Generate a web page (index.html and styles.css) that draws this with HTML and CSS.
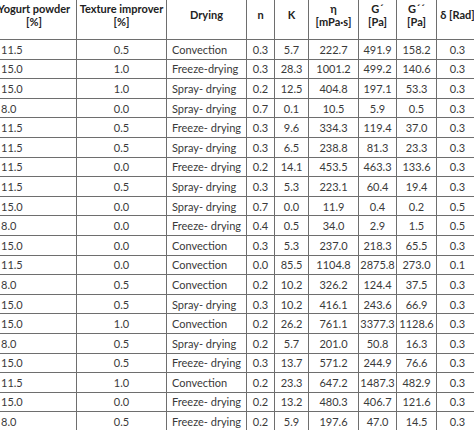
FILE: index.html
```html
<!DOCTYPE html>
<html>
<head>
<meta charset="utf-8">
<link rel="stylesheet" href="styles.css">
</head>
<body>
<table class="data">
<colgroup>
<col class="c1"><col class="c2"><col class="c3"><col class="c4"><col class="c5"><col class="c6"><col class="c7"><col class="c8"><col class="c9">
</colgroup>
<thead>
<tr>
<th>Yogurt powder<br>[%]</th>
<th>Texture improver<br>[%]</th>
<th>Drying</th>
<th>n</th>
<th>K</th>
<th>η<br>[mPa·s]</th>
<th>G´<br>[Pa]</th>
<th>G´´<br>[Pa]</th>
<th>δ [Rad]</th>
</tr>
</thead>
<tbody>
<tr><td>11.5</td><td>0.5</td><td>Convection</td><td>0.3</td><td>5.7</td><td>222.7</td><td>491.9</td><td>158.2</td><td>0.3</td></tr>
<tr><td>15.0</td><td>1.0</td><td>Freeze-drying</td><td>0.3</td><td>28.3</td><td>1001.2</td><td>499.2</td><td>140.6</td><td>0.3</td></tr>
<tr><td>15.0</td><td>1.0</td><td>Spray- drying</td><td>0.2</td><td>12.5</td><td>404.8</td><td>197.1</td><td>53.3</td><td>0.3</td></tr>
<tr><td>8.0</td><td>0.0</td><td>Spray- drying</td><td>0.7</td><td>0.1</td><td>10.5</td><td>5.9</td><td>0.5</td><td>0.3</td></tr>
<tr><td>11.5</td><td>0.5</td><td>Freeze- drying</td><td>0.3</td><td>9.6</td><td>334.3</td><td>119.4</td><td>37.0</td><td>0.3</td></tr>
<tr><td>11.5</td><td>0.5</td><td>Spray- drying</td><td>0.3</td><td>6.5</td><td>238.8</td><td>81.3</td><td>23.3</td><td>0.3</td></tr>
<tr><td>11.5</td><td>0.0</td><td>Freeze- drying</td><td>0.2</td><td>14.1</td><td>453.5</td><td>463.3</td><td>133.6</td><td>0.3</td></tr>
<tr><td>11.5</td><td>0.5</td><td>Spray- drying</td><td>0.3</td><td>5.3</td><td>223.1</td><td>60.4</td><td>19.4</td><td>0.3</td></tr>
<tr><td>15.0</td><td>0.0</td><td>Spray- drying</td><td>0.7</td><td>0.0</td><td>11.9</td><td>0.4</td><td>0.2</td><td>0.5</td></tr>
<tr><td>8.0</td><td>0.0</td><td>Freeze- drying</td><td>0.4</td><td>0.5</td><td>34.0</td><td>2.9</td><td>1.5</td><td>0.5</td></tr>
<tr><td>15.0</td><td>0.0</td><td>Convection</td><td>0.3</td><td>5.3</td><td>237.0</td><td>218.3</td><td>65.5</td><td>0.3</td></tr>
<tr><td>11.5</td><td>0.0</td><td>Convection</td><td>0.0</td><td>85.5</td><td>1104.8</td><td>2875.8</td><td>273.0</td><td>0.1</td></tr>
<tr><td>8.0</td><td>0.5</td><td>Convection</td><td>0.2</td><td>10.2</td><td>326.2</td><td>124.4</td><td>37.5</td><td>0.3</td></tr>
<tr><td>15.0</td><td>0.5</td><td>Spray- drying</td><td>0.3</td><td>10.2</td><td>416.1</td><td>243.6</td><td>66.9</td><td>0.3</td></tr>
<tr><td>15.0</td><td>1.0</td><td>Convection</td><td>0.2</td><td>26.2</td><td>761.1</td><td>3377.3</td><td>1128.6</td><td>0.3</td></tr>
<tr><td>8.0</td><td>0.5</td><td>Spray- drying</td><td>0.2</td><td>5.7</td><td>201.0</td><td>50.8</td><td>16.3</td><td>0.3</td></tr>
<tr><td>15.0</td><td>0.5</td><td>Freeze- drying</td><td>0.3</td><td>13.7</td><td>571.2</td><td>244.9</td><td>76.6</td><td>0.3</td></tr>
<tr><td>11.5</td><td>1.0</td><td>Convection</td><td>0.2</td><td>23.3</td><td>647.2</td><td>1487.3</td><td>482.9</td><td>0.3</td></tr>
<tr><td>15.0</td><td>0.0</td><td>Freeze- drying</td><td>0.2</td><td>13.2</td><td>480.3</td><td>406.7</td><td>121.6</td><td>0.3</td></tr>
<tr><td>8.0</td><td>0.5</td><td>Freeze- drying</td><td>0.2</td><td>5.9</td><td>197.6</td><td>47.0</td><td>14.5</td><td>0.3</td></tr>
</tbody>
</table>
</body>
</html>
```
FILE: styles.css
```css
html, body {
  margin: 0;
  padding: 0;
  background: #ffffff;
  overflow: hidden;
}
body {
  width: 474px;
  height: 430px;
  font-family: Lato, "Noto Sans", sans-serif;
  color: #3a3a3a;
}
.data {
  border-collapse: collapse;
  table-layout: fixed;
  width: 487px;
  margin-left: -9px;
  font-size: 11px;
}
.c1 { width: 85px; }
.c2 { width: 90px; }
.c3 { width: 80px; }
.c4 { width: 28px; }
.c5 { width: 34px; }
.c6 { width: 50px; }
.c7 { width: 38px; }
.c8 { width: 40px; }
.c9 { width: 42px; }
.data th,
.data td {
  border: 1px solid #6e6e6e;
  padding: 0;
  text-align: center;
  vertical-align: middle;
  white-space: nowrap;
  overflow: hidden;
}
.data thead th { border-top: none; }
.data th {
  height: 29px;
  padding-bottom: 10px;
  font-weight: 700;
  color: #222;
  line-height: 13px;
}
.data td {
  height: 18.6px;
  line-height: 13px;
}
.data td:first-child {
  text-align: left;
  padding-left: 9px;
}
.data td:nth-child(3) {
  text-align: left;
  padding-left: 5px;
}
```
